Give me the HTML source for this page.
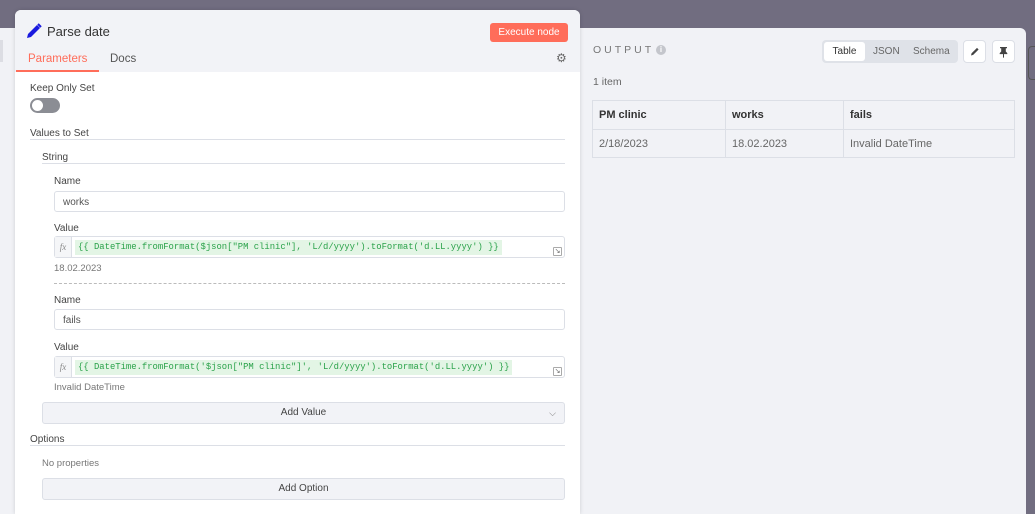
<!DOCTYPE html>
<html><head><meta charset="utf-8"><style>
*{box-sizing:border-box;margin:0;padding:0}
html,body{width:1035px;height:514px;overflow:hidden}
body{background:#716d80;font-family:"Liberation Sans",sans-serif;position:relative;color:#444}
.abs{position:absolute}
.leftbg{left:0;top:28px;width:20px;height:486px;background:#f1f2f6}
.tab{left:0;top:40px;width:3px;height:22px;background:#dcdde3}
.out{left:578px;top:28px;width:448px;height:486px;background:#f1f2f6;border-radius:0 6px 0 0}
.edge{left:1028px;top:46px;width:7px;height:34px;border:1px solid #555;border-right:none;border-radius:4px 0 0 4px}
.node{left:15px;top:10px;width:565px;height:504px;background:#fff;border-radius:6px 6px 0 0;overflow:hidden;box-shadow:0 0 4px rgba(0,0,0,.15)}
.hdr{left:0;top:0;width:565px;height:62px;background:#f2f3f7}
.t{position:absolute;white-space:nowrap}
.lbl{font-size:10px;color:#444}
.inp{position:absolute;left:39px;width:511px;height:21px;border:1px solid #dcdfe6;border-radius:3px;font-size:10px;color:#555;padding:5px 8px;background:#fff}
.expr{position:absolute;left:39px;width:511px;height:22px;border:1px solid #dcdfe6;border-radius:3px;background:#fff}
.fx{position:absolute;left:0;top:0;width:17px;height:20px;background:#f5f6f8;border-right:1px solid #dcdfe6;font-family:"Liberation Serif",serif;font-style:italic;font-size:9px;color:#888;text-align:center;line-height:20px}
.code{position:absolute;left:20px;top:3px;height:15px;background:#e3f5e5;font-family:"Liberation Mono",monospace;font-size:8.9px;color:#2aa24a;line-height:15px;padding:0 3px}
.rs{position:absolute;right:2px;bottom:1px;width:9px;height:9px;border:1px solid #aaa;border-radius:1px;font-size:7px;line-height:7px;text-align:center;color:#666;background:#fff}
.line{position:absolute;height:1px;background:#dcdfe6}
.btn{position:absolute;left:27px;width:523px;height:22px;background:#f2f3f7;border:1px solid #dcdfe6;border-radius:3px;font-size:10px;color:#444;text-align:center;line-height:20px}
table{border-collapse:collapse;position:absolute;left:592px;top:100px;width:423px;font-size:11px}
td{border:1px solid #dcdfe6;height:29px;padding:0 6px}
tr.h td{font-weight:bold;color:#333;background:#f1f2f6}
tr.r td{color:#666;height:28px}
</style></head><body>
<div class="abs leftbg"></div><div class="abs tab"></div>
<div class="abs out"></div>
<div class="abs edge"></div>

<div class="t" style="left:593px;top:44px;font-size:10.5px;letter-spacing:3px;color:#777">OUTPUT</div>
<div class="abs" style="left:656px;top:45px;width:10px;height:10px;border-radius:50%;background:#c4c6cc;color:#fff;font-size:8px;text-align:center;line-height:10px;font-weight:bold">i</div>
<div class="abs" style="left:822px;top:40px;width:136px;height:23px;background:#dfe2e8;border-radius:4px"></div>
<div class="abs" style="left:824px;top:42px;width:41px;height:19px;background:#fff;border-radius:3px;font-size:10px;color:#333;text-align:center;line-height:19px">Table</div>
<div class="t" style="left:873px;top:46px;font-size:10px;color:#666">JSON</div>
<div class="t" style="left:913px;top:46px;font-size:10px;color:#666">Schema</div>
<div class="abs" style="left:963px;top:40px;width:23px;height:23px;background:#fff;border:1px solid #dcdfe6;border-radius:4px"><svg width="21" height="21" viewBox="0 0 21 21"><path d="M7 14.5 L7.6 12.3 L13 6.9 L14.6 8.5 L9.2 13.9 Z" fill="#444"/></svg></div>
<div class="abs" style="left:992px;top:40px;width:23px;height:23px;background:#fff;border:1px solid #dcdfe6;border-radius:4px"><svg width="21" height="21" viewBox="0 0 21 21"><path d="M7 6h7v1.3h-1.2v3.2l1.5 1.6v1H11v3.5h-1v-3.5H6.7v-1l1.5-1.6V7.3H7z" fill="#444"/></svg></div>
<div class="t" style="left:593px;top:76px;font-size:10.5px;color:#666">1 item</div>
<table><tr class="h"><td style="width:133px">PM clinic</td><td style="width:118px">works</td><td>fails</td></tr>
<tr class="r"><td>2/18/2023</td><td>18.02.2023</td><td>Invalid DateTime</td></tr></table>

<div class="abs node">
<div class="abs hdr"></div>
<svg class="abs" style="left:11px;top:13px" width="16" height="16" viewBox="0 0 16 16"><path d="M1 15 L2 11 L11 2 L14 5 L5 14 Z" fill="#1a1adf"/><path d="M12 1 L15 4" stroke="#1a1adf" stroke-width="2"/></svg>
<div class="t" style="left:32px;top:14px;font-size:13px;color:#333">Parse date</div>
<div class="abs" style="left:475px;top:13px;width:78px;height:19px;background:#ff6d5a;border-radius:3px;color:#fff;font-size:10px;text-align:center;line-height:19px">Execute node</div>
<div class="t" style="left:13px;top:43px;font-size:11.5px;color:#ff6d5a">Parameters</div>
<div class="abs" style="left:1px;top:60px;width:83px;height:2px;background:#ff6d5a"></div>
<div class="t" style="left:95px;top:43px;font-size:11.5px;color:#555">Docs</div>
<div class="t" style="left:541px;top:41px;font-size:12px;color:#666">⚙</div>

<div class="t lbl" style="left:15px;top:73px">Keep Only Set</div>
<div class="abs" style="left:15px;top:88px;width:30px;height:15px;border-radius:8px;background:#8b8d94"></div>
<div class="abs" style="left:17px;top:90px;width:11px;height:11px;border-radius:50%;background:#fff"></div>
<div class="t lbl" style="left:15px;top:118px">Values to Set</div>
<div class="line" style="left:15px;top:129px;width:535px"></div>
<div class="t lbl" style="left:27px;top:142px">String</div>
<div class="line" style="left:27px;top:153px;width:523px"></div>

<div class="t lbl" style="left:39px;top:166px">Name</div>
<div class="inp" style="top:181px">works</div>
<div class="t lbl" style="left:39px;top:213px">Value</div>
<div class="expr" style="top:226px"><div class="fx">fx</div><div class="code">{{ DateTime.fromFormat($json["PM clinic"], 'L/d/yyyy').toFormat('d.LL.yyyy') }}</div><div class="rs">↘</div></div>
<div class="t" style="left:39px;top:253px;font-size:9.5px;color:#777">18.02.2023</div>
<div class="abs" style="left:39px;top:273px;width:511px;border-top:1px dashed #bbb"></div>

<div class="t lbl" style="left:39px;top:285px">Name</div>
<div class="inp" style="top:299px">fails</div>
<div class="t lbl" style="left:39px;top:332px">Value</div>
<div class="expr" style="top:346px"><div class="fx">fx</div><div class="code">{{ DateTime.fromFormat('$json["PM clinic"]', 'L/d/yyyy').toFormat('d.LL.yyyy') }}</div><div class="rs">↘</div></div>
<div class="t" style="left:39px;top:372px;font-size:9.5px;color:#777">Invalid DateTime</div>

<div class="btn" style="top:392px">Add Value<span style="position:absolute;right:8px;top:0;color:#777;font-size:9px">⌵</span></div>
<div class="t lbl" style="left:15px;top:424px">Options</div>
<div class="line" style="left:15px;top:435px;width:535px"></div>
<div class="t" style="left:27px;top:448px;font-size:9.5px;color:#777">No properties</div>
<div class="btn" style="top:468px">Add Option</div>
</div>
</body></html>
